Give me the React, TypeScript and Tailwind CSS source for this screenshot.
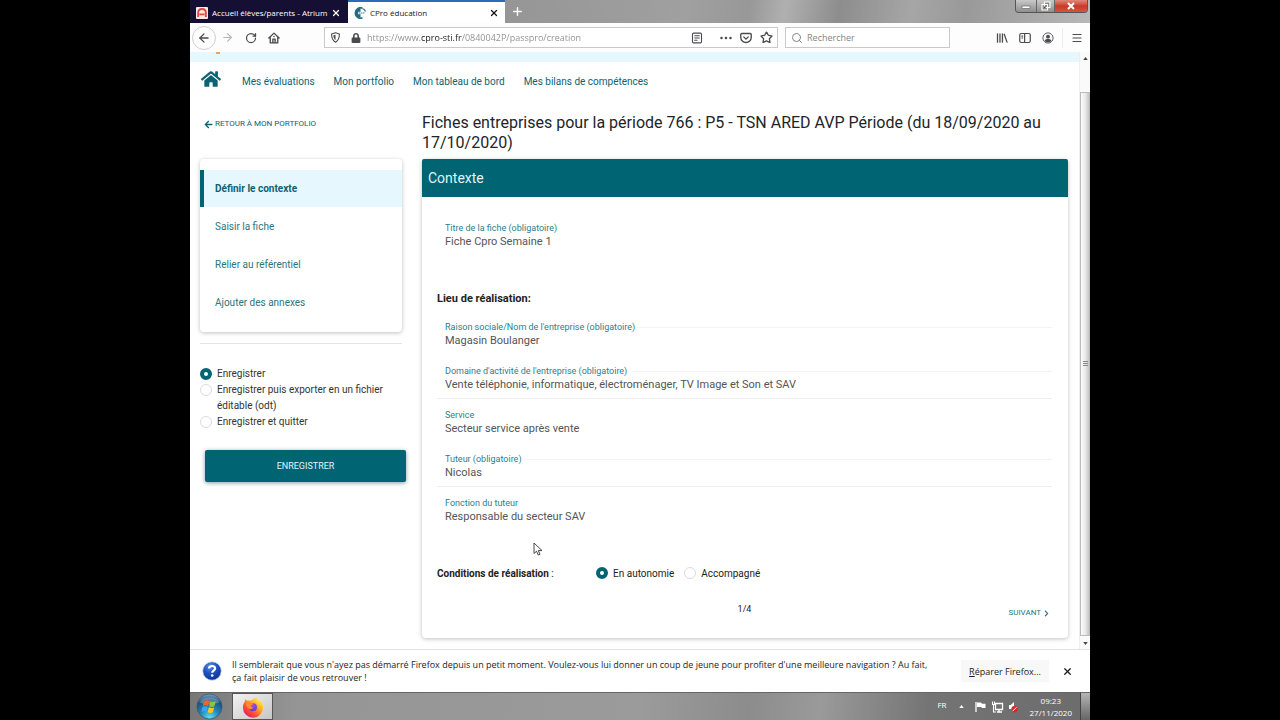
import { ReactNode } from 'react';
import { ArrowLeft, ArrowRight, Menu, Plus, RotateCw, Search, Star, X } from 'lucide-react';
import { FaArrowLeft, FaChevronRight, FaHome, FaLock } from 'react-icons/fa';

const pageFont = "font-['Roboto',sans-serif]";

function AtriumIcon() {
  return (
    <svg viewBox="0 0 12 12" className="size-3 shrink-0" aria-hidden="true">
      <rect width="12" height="12" rx="1" fill="#fbe9e6" />
      <path d="M2.200 10V5.600C2.200 3.300 3.800 2 6 2s3.800 1.300 3.800 3.600V10M3.500 7.400h5" fill="none" stroke="#e0483d" strokeWidth="1.900" />
    </svg>
  );
}

function CproIcon() {
  return (
    <svg viewBox="0 0 12 12" className="size-3 shrink-0" aria-hidden="true">
      <path d="M6.500 1A5 5 0 0 0 6.500 11z" fill="#1b6f80" />
      <path d="M8.500 1.200A5.200 5.200 0 1 0 8.500 10.800" fill="none" stroke="#1b6f80" strokeWidth="1.600" />
      <path d="M4 4.800h7.500v2.400H4z" fill="#fff" />
      <path d="M4.500 6h6.500" stroke="#7fa9b5" strokeWidth="1.400" strokeDasharray="1.500 .5" />
      <path d="M8.500 1.500q2.300.8 3 3" fill="none" stroke="#1b6f80" strokeWidth="1.200" />
    </svg>
  );
}

function HouseOutline() {
  return (
    <svg viewBox="0 0 16 16" className="size-3" fill="none" stroke="currentColor" strokeWidth="1.800" strokeLinejoin="round" strokeLinecap="round" aria-hidden="true">
      <path d="M1.200 8 8 1.500 14.800 8M3 7v7.500h10V7" />
      <path d="M6.500 14V9.500h3V14" />
      <path d="M8 5.800v.4" />
    </svg>
  );
}

function ShieldIcon() {
  return (
    <svg viewBox="0 0 16 16" className="size-[11px] shrink-0 text-[#4a4a4f]" aria-hidden="true">
      <path d="M8 1.200 2.300 2.800c0 5 .8 9 5.700 12 4.900-3 5.700-7 5.700-12z" fill="none" stroke="currentColor" strokeWidth="1.600" strokeLinejoin="round" />
      <path d="M8 4v8c-2.500-2-3-4.500-3-7.200z" fill="currentColor" />
    </svg>
  );
}

function ReaderIcon() {
  return (
    <svg viewBox="0 0 16 16" className="size-3" fill="none" stroke="currentColor" strokeWidth="1.500" strokeLinecap="round" aria-hidden="true">
      <rect x="2" y="1.500" width="12" height="13" rx="1.500" />
      <path d="M5 5h6M5 8h6M5 11h3" />
    </svg>
  );
}

function DotsIcon() {
  return (
    <svg viewBox="0 0 16 16" className="size-3" fill="currentColor" aria-hidden="true">
      <circle cx="2" cy="8" r="1.700" />
      <circle cx="8" cy="8" r="1.700" />
      <circle cx="14" cy="8" r="1.700" />
    </svg>
  );
}

function PocketIcon() {
  return (
    <svg viewBox="0 0 16 16" className="size-3" fill="none" stroke="currentColor" strokeWidth="1.800" strokeLinecap="round" strokeLinejoin="round" aria-hidden="true">
      <path d="M2.500 2h11a1.500 1.500 0 0 1 1.500 1.500v3.500a7 7 0 0 1-14 0V3.500a1.500 1.500 0 0 1 1.500-1.500z" />
      <path d="m5 6.500 3 3 3-3" />
    </svg>
  );
}

function LibraryIcon() {
  return (
    <svg viewBox="0 0 16 16" className="size-3" stroke="currentColor" strokeWidth="1.700" strokeLinecap="round" aria-hidden="true">
      <path d="M2 2.500v11M5.300 2.500v11M8.600 2.500v11M11 3l3.700 10.500" />
    </svg>
  );
}

function SidebarIcon() {
  return (
    <svg viewBox="0 0 16 16" className="size-3" fill="none" stroke="currentColor" strokeWidth="1.600" aria-hidden="true">
      <rect x="1" y="2" width="14" height="12" rx="2" />
      <path d="M7.500 2v12M3.200 5.500h2.300M3.200 8h2.300" />
    </svg>
  );
}

function AccountIcon() {
  return (
    <svg viewBox="0 0 16 16" className="size-3" aria-hidden="true">
      <circle cx="8" cy="8" r="6.800" fill="none" stroke="currentColor" strokeWidth="1.200" />
      <circle cx="8" cy="6.200" r="2.600" fill="currentColor" />
      <path d="M3.500 11.500c1-1.800 2.600-2.200 4.500-2.200s3.500.4 4.500 2.200C11.300 13 9.800 13.600 8 13.600s-3.300-.6-4.500-2.100z" fill="currentColor" />
    </svg>
  );
}

function HelpIcon() {
  return (
    <svg viewBox="0 0 20 20" className="size-5 shrink-0" aria-hidden="true">
      <defs>
        <radialGradient id="help" cx=".4" cy=".25" r=".8">
          <stop offset="0" stopColor="#5b8be6" />
          <stop offset=".5" stopColor="#1c4fbd" />
          <stop offset="1" stopColor="#0c2f8c" />
        </radialGradient>
      </defs>
      <circle cx="10" cy="10" r="9.300" fill="url(#help)" stroke="#d5dff2" strokeWidth=".8" />
      <path d="M7 7.600C7 5.800 8.300 5 10 5s3.100.9 3.100 2.500c0 2.200-2.900 2.200-2.900 4.300" fill="none" stroke="#fff" strokeWidth="2.200" />
      <circle cx="10.200" cy="14.500" r="1.300" fill="#fff" />
    </svg>
  );
}

function WindowsOrb() {
  return (
    <svg viewBox="0 0 28 28" className="size-[27px]" aria-hidden="true">
      <defs>
        <radialGradient id="orb" cx=".5" cy=".95" r=".95">
          <stop offset="0" stopColor="#5fe0f7" />
          <stop offset=".4" stopColor="#2388bb" />
          <stop offset=".75" stopColor="#1c527f" />
          <stop offset="1" stopColor="#7fa8c0" />
        </radialGradient>
      </defs>
      <circle cx="14" cy="14" r="13" fill="url(#orb)" stroke="#3a5468" strokeWidth=".8" />
      <path d="M4 10a11 9 0 0 1 20 0q-10 3-20 0z" fill="#fff" opacity=".25" />
      <path d="M8.200 8.600q2.700-1.800 5.600-.2l-1.200 5q-2.800-1.400-5.600.1z" fill="#f0632a" />
      <path d="M14.800 8.800q2.600 1.400 5.600-.2l-1.300 5.100q-2.800 1.500-5.500 0z" fill="#8cc63f" />
      <path d="M6.700 14.600q2.800-1.500 5.600-.1L11 19.500q-2.700-1.400-5.500.1z" fill="#3aa5e8" />
      <path d="M13.300 14.900q2.800 1.500 5.500.1l-1.300 5q-2.700 1.500-5.500-.1z" fill="#fcc624" />
    </svg>
  );
}

function FirefoxIcon() {
  return (
    <svg viewBox="0 0 24 24" className="size-[22px]" aria-hidden="true">
      <defs>
        <linearGradient id="fox" x1=".85" y1=".1" x2=".2" y2=".9">
          <stop offset="0" stopColor="#fff04a" />
          <stop offset=".35" stopColor="#ffae24" />
          <stop offset=".7" stopColor="#ff5334" />
          <stop offset="1" stopColor="#e6205c" />
        </linearGradient>
        <radialGradient id="globe" cx=".5" cy=".2" r=".9">
          <stop offset="0" stopColor="#a44be8" />
          <stop offset="1" stopColor="#5a3bc4" />
        </radialGradient>
      </defs>
      <path d="M15.500.8c.2 2 1.200 3 2.700 4.300l1.600-.5c1.900 1.900 3.200 4.700 3.200 8A11 11 0 0 1 1 12.700c0-2.800.9-5.200 2.100-6.700l.4-2.500 2.400 1.700c1-.4 2-.3 2.900-.1C10.200 4.600 13 3.400 15.500.8z" fill="url(#fox)" />
      <circle cx="12" cy="12.200" r="4.300" fill="url(#globe)" />
      <path d="M4.500 8.200c1.700-1.300 3.700-1.300 5.300-.3l2.700.4c-.4 1.400-2.300 1.300-2.500 2.500.2 1.600 1.300 2 2.700 1.600-1 1.700-3.200 2.400-5 1.600C5.800 12.800 4.600 10.500 4.500 8.200z" fill="#ff8a2b" />
      <path d="M12 5.500c3 .2 5.300 2.300 5.900 5.200.5-2.900-.7-5-2.600-6.700-.9.900-2 1.400-3.300 1.500z" fill="#ffcf3a" />
    </svg>
  );
}

function TrayIcons() {
  return (
    <svg viewBox="0 0 44 14" className="h-[14px] w-11" aria-label="Zone de notification" role="img">
      <path d="M2 2v10" stroke="#fff" strokeWidth="1.300" />
      <path d="M3 2.500h4l1 1.300h3.500V8H8L7 7H3z" fill="#fff" />
      <path d="M21.500 3.500h7v6h-7zM23 12h5M25 9.500V12" fill="none" stroke="#fff" strokeWidth="1.300" />
      <path d="M18.500 1.500v3M20.500 1.500v3M18 4.500h3M19.500 4.500V12H22" fill="none" stroke="#fff" strokeWidth="1.100" />
      <path d="M35 5h1.800L40 2v10l-3.200-3H35z" fill="#fff" />
      <circle cx="40.500" cy="9.300" r="3.200" fill="#d42a2a" />
      <path d="m38.600 11.200 3.800-3.800" stroke="#fff" strokeWidth="1" />
    </svg>
  );
}

function IconButton({ label, children, className = '' }: { label: string; children: ReactNode; className?: string }) {
  return (
    <button type="button" aria-label={label} className={`flex shrink-0 items-center justify-center text-[#4a4a4f] ${className}`}>
      {children}
    </button>
  );
}

function TitleBar() {
  return (
    <div className="flex h-[23px] items-stretch bg-[linear-gradient(100deg,#8b8b8b_0%,#939393_30%,#a0a0a0_55%,#989898_62%,#b0b0b0_66%,#8d8d8d_72%,#a6a6a6_80%,#999_86%,#b8b8b8_100%)] text-[8px]">
      <div className="flex w-[158px] items-center gap-1 bg-[#140f33] pt-0.5 pr-[7px] pl-1.5 font-medium text-white">
        <AtriumIcon />
        <span className="flex-1 whitespace-nowrap">Accueil élèves/parents - Atrium</span>
        <button type="button" aria-label="Fermer l'onglet Atrium"><X size={10} strokeWidth={3} /></button>
      </div>
      <div className="flex w-[157px] items-center gap-1 border-t-2 border-[#2b6cb8] bg-white pr-1.5 pl-1.5 font-medium text-[#15141a]">
        <CproIcon />
        <span className="flex-1 whitespace-nowrap">CPro éducation</span>
        <button type="button" aria-label="Fermer l'onglet CPro"><X size={10} strokeWidth={3} /></button>
      </div>
      <button type="button" aria-label="Nouvel onglet" className="flex w-[25px] items-center justify-center text-white">
        <Plus size={13} strokeWidth={2.5} />
      </button>
      <div className="mr-0.5 ml-auto flex h-[13px] overflow-hidden rounded-b border border-t-0 border-[#555] text-white">
        <button type="button" aria-label="Réduire" className="flex w-5 items-center justify-center bg-linear-to-b from-[#c9c9c9] to-[#8f8f8f]">
          <svg viewBox="0 0 10 8" className="h-2 w-2.5"><rect x="1" y="4" width="8" height="2.500" fill="#fff" stroke="#555" strokeWidth=".6" /></svg>
        </button>
        <button type="button" aria-label="Restaurer" className="flex w-[18px] items-center justify-center border-l border-[#666] bg-linear-to-b from-[#c9c9c9] to-[#8f8f8f]">
          <svg viewBox="0 0 10 10" className="size-2.5"><path d="M3.500 1h5.500v5.500H3.500zM1 3.500h5.500V9H1z" fill="#888" stroke="#fff" strokeWidth="1.200" /><path d="M3 5.500h1.500V7H3z" fill="#444" /></svg>
        </button>
        <button type="button" aria-label="Fermer" className="flex w-[33px] items-center justify-center border-l border-[#666] bg-linear-to-b from-[#dd8a7a] via-[#c93a28] to-[#d4543c]">
          <svg viewBox="0 0 10 8" className="h-2 w-2.5"><path d="m2 1 6 6M8 1 2 7" stroke="#fff" strokeWidth="2" /></svg>
        </button>
      </div>
    </div>
  );
}

function Toolbar() {
  return (
    <div className="flex h-[29px] items-center bg-[#fdfdfd] pr-[7px] pl-0.5">
      <IconButton label="Précédent" className="size-6 rounded-full border border-[#cfcfcf]"><ArrowLeft size={14} strokeWidth={2.2} /></IconButton>
      <IconButton label="Suivant" className="size-[23px]"><ArrowRight size={13} color="#b5b5b5" /></IconButton>
      <IconButton label="Actualiser" className="size-[23px]"><RotateCw size={12} strokeWidth={2.5} /></IconButton>
      <IconButton label="Accueil" className="size-[23px]"><HouseOutline /></IconButton>
      <div className="ml-[39px] flex h-[21px] min-w-0 flex-[446] items-center border border-[#c9c9c9] bg-white pr-1 pl-[5px]">
        <ShieldIcon />
        <FaLock size={10} className="mr-1.5 ml-2.5 shrink-0 text-[#4a4a4f]" aria-hidden="true" />
        <input
          aria-label="Adresse"
          defaultValue="https://www.cpro-sti.fr/0840042P/passpro/creation"
          className="min-w-0 flex-1 bg-[linear-gradient(90deg,#8c8c8c_0_53px,#1c1c1c_53px_95px,#8c8c8c_95px)] bg-clip-text text-[9px] text-transparent outline-none"
        />
        <IconButton label="Mode lecture"><ReaderIcon /></IconButton>
        <IconButton label="Actions de page" className="ml-[17px]"><DotsIcon /></IconButton>
        <IconButton label="Enregistrer dans Pocket" className="ml-2"><PocketIcon /></IconButton>
        <IconButton label="Marque-page" className="ml-2"><Star size={13} strokeWidth={2.4} /></IconButton>
      </div>
      <label className="ml-[7px] flex h-[21px] min-w-0 flex-[154] items-center gap-1 border border-[#c9c9c9] bg-white px-[5px] text-[#858585]">
        <Search size={12} />
        <input type="search" aria-label="Rechercher" placeholder="Rechercher" className="min-w-0 flex-1 text-[9px] outline-none placeholder:text-[#858585]" />
      </label>
      <div className="ml-[46px] flex items-center gap-[11px]">
        <IconButton label="Bibliothèque"><LibraryIcon /></IconButton>
        <IconButton label="Barre latérale"><SidebarIcon /></IconButton>
        <IconButton label="Compte"><AccountIcon /></IconButton>
      </div>
      <IconButton label="Menu" className="ml-2 h-5 border-l border-[#ececec] pl-2"><Menu size={12} strokeWidth={2.4} /></IconButton>
    </div>
  );
}

const navLinks = ['Mes évaluations', 'Mon portfolio', 'Mon tableau de bord', 'Mes bilans de compétences'];

function SiteNav() {
  return (
    <nav className="flex h-[38px] items-center gap-[19px] pl-[11px] text-[10px] text-[#0b6371]">
      <a href="#accueil" aria-label="Accueil" className="mr-0.5 pb-1"><FaHome size={20} /></a>
      {navLinks.map((link) => (
        <a key={link} href="#nav" className="whitespace-nowrap">{link}</a>
      ))}
    </nav>
  );
}

const radioClass =
  'size-3 shrink-0 appearance-none rounded-full border border-[#dcdcdc] bg-white checked:border-4 checked:border-[#006473]';

const steps = ['Saisir la fiche', 'Relier au référentiel', 'Ajouter des annexes'];

function SidePanel() {
  return (
    <aside className="w-[206px] shrink-0">
      <a href="#portfolio" className="mt-[15px] ml-1 flex h-[18px] items-center gap-0.5 text-[8px] text-[#0b6371]">
        <FaArrowLeft size={9} />
        RETOUR À MON PORTFOLIO
      </a>
      <div className="mt-[26px] mr-1 rounded bg-white pt-[11px] pb-[11px] text-[10px] text-[#2b7480] shadow-[0_1px_4px_rgba(0,0,0,0.25)]">
        <a href="#contexte" className="flex h-[37px] items-center border-l-4 border-[#006473] bg-[#e6f8fd] pl-[11px] font-bold text-[#0b6371]">
          Définir le contexte
        </a>
        {steps.map((step) => (
          <a key={step} href="#etape" className="flex h-[38px] items-center pl-[15px]">{step}</a>
        ))}
      </div>
      <hr className="mt-[11px] mr-1 border-[#e4e4e4]" />
      <form className="mt-[22px] text-[10px] leading-4 text-[#333]">
        <label className="flex gap-[5px]"><input type="radio" name="action" defaultChecked className={`mt-0.5 ${radioClass}`} />Enregistrer</label>
        <label className="flex gap-[5px]"><input type="radio" name="action" className={`mt-0.5 ${radioClass}`} /><span className="max-w-[172px]">Enregistrer puis exporter en un fichier éditable (odt)</span></label>
        <label className="flex gap-[5px]"><input type="radio" name="action" className={`mt-0.5 ${radioClass}`} />Enregistrer et quitter</label>
        <button type="button" className="mt-5 ml-[5px] h-8 w-[201px] rounded-xs bg-[#006473] text-[9px] text-[#e3f6f8] shadow-[0_1px_4px_rgba(0,60,70,0.5)]">
          ENREGISTRER
        </button>
      </form>
    </aside>
  );
}

type FieldProps = { id: string; label: string; value: string; topLine?: boolean; bottomLine?: boolean };

function Field({ id, label, value, topLine, bottomLine }: FieldProps) {
  return (
    <div className={`h-[34px] border-b ${bottomLine ? 'border-[#efefef]' : 'border-transparent'}`}>
      <div className="flex h-[13px] items-center gap-1 pl-2">
        <label htmlFor={id} className="text-[9px] text-[#2b7f8a]">{label}</label>
        {topLine && <span className="h-px flex-1 bg-[#f4f4f4]" />}
      </div>
      <input id={id} defaultValue={value} className="block h-[14px] w-full pl-2 text-[11px] text-[#555] outline-none" />
    </div>
  );
}

function ContextForm() {
  return (
    <main className="min-w-0 flex-1">
      <h1 className="mt-[13px] text-[16px] leading-5 text-[#212529]">
        Fiches entreprises pour la période 766 : P5 - TSN ARED AVP Période (du 18/09/2020 au 17/10/2020)
      </h1>
      <section className="mt-1.5 rounded-sm bg-white shadow-[0_1px_4px_rgba(0,0,0,0.25)]">
        <h2 className="flex h-[38px] items-center rounded-t-xs bg-[#006473] pl-1.5 text-[14px] text-[#dff5f8]">Contexte</h2>
        <form className="pr-4 pb-[17px] pl-[15px] text-[10px] text-[#222]">
          <div className="pt-[25px]"><Field id="titre" label="Titre de la fiche (obligatoire)" value="Fiche Cpro Semaine 1" /></div>
          <h3 className="mt-[35px] mb-3.5 h-4 text-[11px] leading-4 font-bold">Lieu de réalisation:</h3>
          <div className="flex flex-col gap-2.5">
            <Field id="raison" label="Raison sociale/Nom de l'entreprise (obligatoire)" value="Magasin Boulanger" topLine />
            <Field id="domaine" label="Domaine d'activité de l'entreprise (obligatoire)" value="Vente téléphonie, informatique, électroménager, TV Image et Son et SAV" topLine bottomLine />
            <Field id="service" label="Service" value="Secteur service après vente" />
            <Field id="tuteur" label="Tuteur (obligatoire)" value="Nicolas" topLine bottomLine />
            <Field id="fonction" label="Fonction du tuteur" value="Responsable du secteur SAV" />
          </div>
          <fieldset className="mt-8 flex h-5 items-center">
            <div className="w-[159px]"><b>Conditions de réalisation</b> :</div>
            <label className="flex items-center gap-[5px]"><input type="radio" name="condition" defaultChecked className={radioClass} />En autonomie</label>
            <label className="ml-2.5 flex items-center gap-[5px]"><input type="radio" name="condition" className={radioClass} />Accompagné</label>
          </fieldset>
          <div className="mt-5 flex items-center">
            <span className="flex-1 text-center text-[9px] leading-[13px]">1/4</span>
          </div>
          <div className="-mt-3 flex justify-end pt-px pr-0.5">
            <a href="#suivant" className="flex h-4 items-center gap-0.5 text-[8px] text-[#2b7480]">SUIVANT <FaChevronRight size={7} /></a>
          </div>
        </form>
      </section>
    </main>
  );
}

function Scrollbar() {
  return (
    <div className="flex w-[11px] shrink-0 flex-col items-center border-l border-[#eee] bg-[#fafafa]" aria-hidden="true">
      <svg viewBox="0 0 6 4" className="mt-[5px] mb-8 h-[3px] w-[5px]"><path d="M0 4h6L3 0z" fill="#444" /></svg>
      <div className="flex w-full flex-1 items-center justify-center border border-[#bbb] bg-linear-to-r from-[#fafafa] via-[#ececec] to-[#c4c4c4]">
        <svg viewBox="0 0 5 6" className="h-1.5 w-[5px]"><path d="M0 .5h5M0 2.500h5M0 4.500h5" stroke="#888" strokeWidth="1" /></svg>
      </div>
      <svg viewBox="0 0 6 4" className="mt-1.5 mb-1 h-[3px] w-[5px]"><path d="M0 0h6L3 4z" fill="#444" /></svg>
    </div>
  );
}

function NotificationBar() {
  return (
    <div className="flex h-[43px] items-center border-t border-[#e2e2e2] bg-white pr-[17px] pl-3 text-[9px] leading-[13px] text-[#1c1c1c]">
      <HelpIcon />
      <p className="ml-2.5 max-w-[704px] flex-1">
        Il semblerait que vous n'ayez pas démarré Firefox depuis un petit moment. Voulez-vous lui donner un coup de jeune pour profiter d'une meilleure navigation ? Au fait, ça fait plaisir de vous retrouver !
      </p>
      <button type="button" className="ml-auto h-[22px] w-[88px] shrink-0 bg-[#f8f8f8]"><u>R</u>éparer Firefox...</button>
      <button type="button" aria-label="Fermer" className="ml-[13px]"><X size={11} strokeWidth={2.8} /></button>
    </div>
  );
}

function Taskbar() {
  return (
    <footer className="flex h-7 items-stretch border-t border-[#666] bg-[linear-gradient(95deg,#777_0%,#959595_12%,#9b9b9b_50%,#8c8c8c_62%,#9a9a9a_70%,#747474_82%,#6c6c6c_100%)] text-[8px] text-white">
      <button type="button" aria-label="Démarrer" className="flex w-[42px] items-center justify-center pr-1"><WindowsOrb /></button>
      <button type="button" aria-label="Firefox" className="flex w-[41px] items-center justify-center border border-[#555] bg-linear-to-br from-[#f2f2f2] to-[#c6c6c6]"><FirefoxIcon /></button>
      <span className="mt-1.5 ml-auto leading-3">FR</span>
      <div className="ml-3 flex items-center gap-2.5">
        <svg viewBox="0 0 6 4" className="h-[3px] w-[5px]" aria-hidden="true"><path d="M0 4h6L3 0z" fill="#fff" /></svg>
        <TrayIcons />
      </div>
      <div className="ml-3 pt-0.5 text-center leading-3"><div>09:23</div><div>27/11/2020</div></div>
      <div className="ml-2 w-2.5 border-l border-[#444] bg-linear-to-b from-[#b5b5b5] to-[#666]" />
    </footer>
  );
}

export default function App() {
  return (
    <div className="min-h-screen bg-black font-['Open_Sans',sans-serif]">
      <div className="mx-auto flex min-h-screen w-full max-w-[900px] flex-col bg-white">
        <TitleBar />
        <Toolbar />
        <div className="flex flex-1">
          <div className={`relative min-w-0 flex-1 ${pageFont}`}>
            <div className="h-2.5 bg-[#e6f8fd] pl-[26px]"><div className="h-0.5 w-1 bg-[#f0a35c]" /></div>
            <SiteNav />
            <div className="flex gap-4 pr-[11px] pb-2.5 pl-2.5">
              <SidePanel />
              <ContextForm />
            </div>
            <svg viewBox="0 0 10 14" className="absolute top-[490px] left-[343px] h-3.5 w-2.5" aria-hidden="true">
              <path d="M1 1v10.500l2.600-2.300 1.700 3.900 1.700-.8-1.700-3.700H9z" fill="#fff" stroke="#333" strokeWidth=".9" />
            </svg>
          </div>
          <Scrollbar />
        </div>
        <NotificationBar />
        <Taskbar />
      </div>
    </div>
  );
}
